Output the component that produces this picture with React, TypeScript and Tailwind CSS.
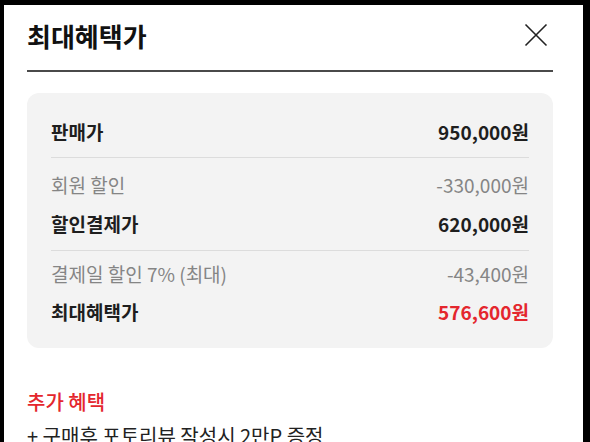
import React from 'react';

interface PriceRow {
  label: string;
  value: string;
  tone: 'strong' | 'muted' | 'accent';
  className: string;
}

const font = { fontFamily: '"Noto Sans CJK KR", "Noto Sans", sans-serif' };

const toneStyles: Record<PriceRow['tone'], { label: string; value: string }> = {
  strong: { label: 'font-bold text-[#1e1e1e]', value: 'font-bold text-[#1e1e1e]' },
  muted: { label: 'text-[#858585]', value: 'text-[#858585]' },
  accent: { label: 'font-bold text-[#1e1e1e]', value: 'font-bold text-[#e4262d]' },
};

function Row({ row }: { row: PriceRow }) {
  const t = toneStyles[row.tone];
  return (
    <div className={`flex items-center justify-between text-[19px] leading-[26px] ${row.className}`}>
      <span className={t.label}>{row.label}</span>
      <span className={t.value}>{row.value}</span>
    </div>
  );
}

export default function App() {
  return (
    <div className="h-[442px] w-[590px] overflow-hidden bg-black pl-[4px] pr-[7px] pt-[5px]" style={font}>
      <div className="h-full bg-white pl-[23px] pr-[30px] pt-[15px]">
        {/* header */}
        <div className="flex h-[32px] items-center justify-between">
          <h2 className="text-[26px] font-bold leading-[32px] text-[#111]">최대혜택가</h2>
          <button aria-label="닫기" className="mr-[5px] -mt-[3px]">
            <svg width="24" height="24" viewBox="0 0 24 24" fill="none" stroke="#222" strokeWidth="1.6">
              <path d="M1.5 1.5 L22.5 22.5 M22.5 1.5 L1.5 22.5" />
            </svg>
          </button>
        </div>
        <div className="mt-[18px] h-[2px] bg-[#4a4a4a]" />

        {/* price box */}
        <div className="mt-[21px] rounded-[12px] bg-[#f3f3f3] px-[24px] pb-[16px] pt-[20px]">
          <Row row={{ label: '판매가', value: '950,000원', tone: 'strong', className: 'h-[38px]' }} />
          <div className="mt-[6px] h-px bg-[#dcdcdc]" />
          <Row row={{ label: '회원 할인', value: '-330,000원', tone: 'muted', className: 'mt-[8px] h-[38px]' }} />
          <Row row={{ label: '할인결제가', value: '620,000원', tone: 'strong', className: 'h-[40px]' }} />
          <div className="mt-[6px] h-px bg-[#dcdcdc]" />
          <Row row={{ label: '결제일 할인 7% (최대)', value: '-43,400원', tone: 'muted', className: 'mt-[5px] h-[36px]' }} />
          <Row row={{ label: '최대혜택가', value: '576,600원', tone: 'accent', className: 'h-[40px]' }} />
        </div>

        {/* extra benefit */}
        <p className="mt-[41px] text-[20px] font-medium leading-[26px] text-[#e4262d]">추가 혜택</p>
        <p className="mt-[8px] text-[20px] leading-[26px] text-[#222]">+ 구매후 포토리뷰 작성시 2만P 증정</p>
      </div>
    </div>
  );
}
